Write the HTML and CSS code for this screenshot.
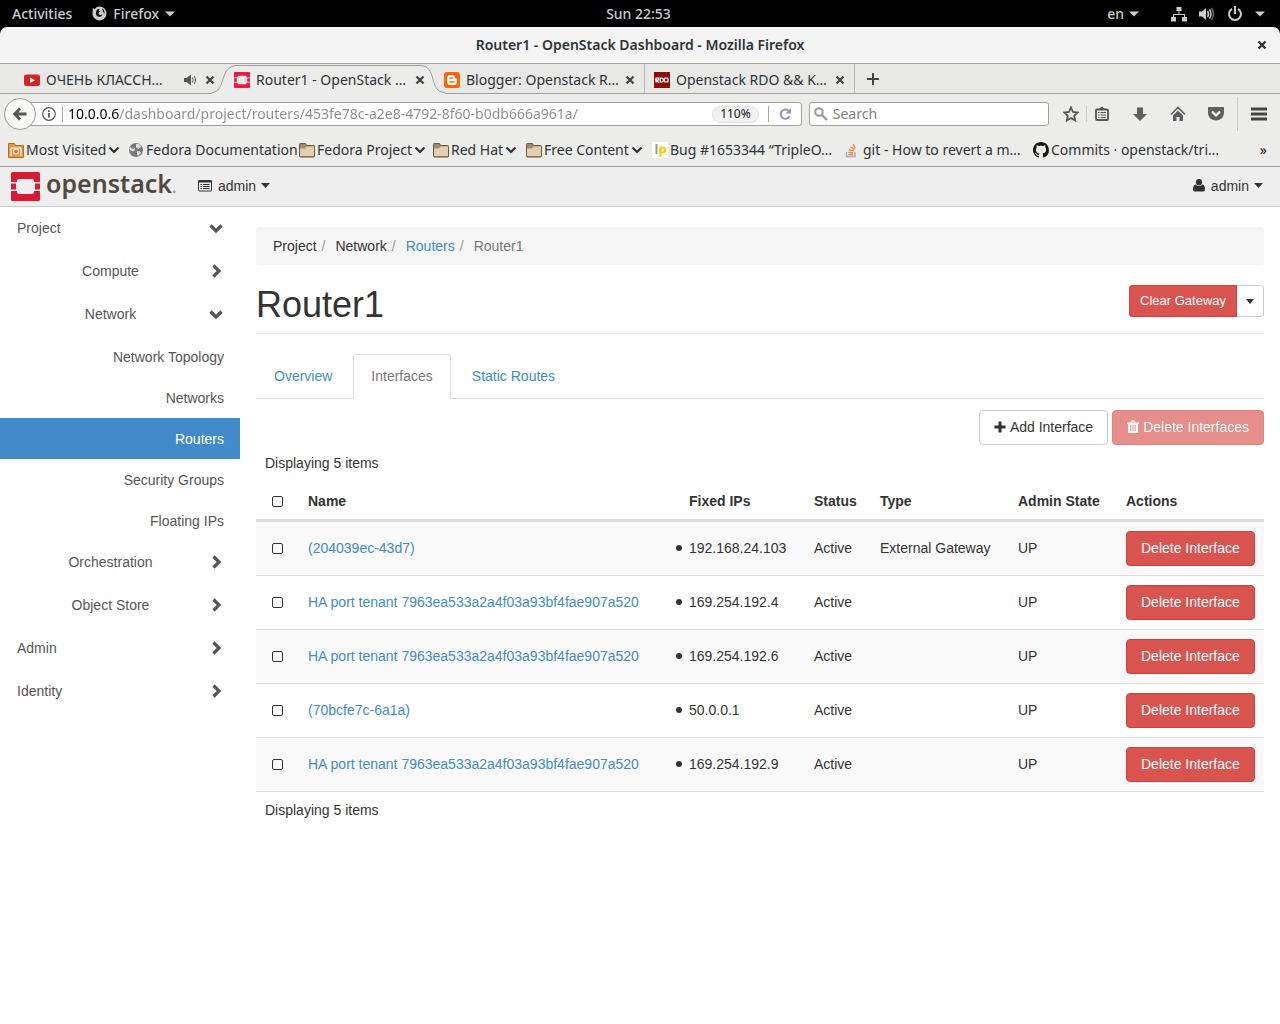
FILE: index.html
```html
<!DOCTYPE html>
<html lang="en">
<head>
<meta charset="utf-8">
<title>Router1 - OpenStack Dashboard</title>
<link rel="stylesheet" href="styles.css">
</head>
<body>
<svg class="defs" aria-hidden="true">
  <symbol id="caret" viewBox="0 0 10 6"><path d="M0 0.5h10L5 5.5z" fill="currentColor"/></symbol>
  <symbol id="close" viewBox="0 0 10 10"><path d="M1.5 1.5l7 7M8.5 1.5l-7 7" stroke="currentColor" stroke-width="2.4" fill="none"/></symbol>
  <symbol id="chev" viewBox="0 0 12 8"><path d="M1.5 1.5L6 6l4.500-4.500" stroke="currentColor" stroke-width="2.200" fill="none"/></symbol>
  <symbol id="folder" viewBox="0 0 16 16"><path d="M.5 2.500q0-1 1-1h5l1 2h7q1 0 1 1v9.500q0 1-1 1h-13q-1 0-1-1z" fill="#a08a66" stroke="#71573a"/><path d="M1 6.500h5l1.500-2H15V14H1z" fill="#e3cfb2"/></symbol>
  <symbol id="down" viewBox="0 0 14 14"><path d="M1.500 4.500L7 10l5.500-5.500" stroke="currentColor" stroke-width="3.200" fill="none"/></symbol>
  <symbol id="right" viewBox="0 0 14 14"><path d="M4.500 1.500L10 7l-5.500 5.500" stroke="currentColor" stroke-width="3.200" fill="none"/></symbol>
  <symbol id="os" viewBox="0 0 29 29"><path fill-rule="evenodd" d="M1.500 0h26Q29 0 29 1.500V10h-6V9q0-2-2-2H8Q6 7 6 9v1H0V1.500Q0 0 1.500 0zM0 11.500h5v6H0zM24 11.500h5v6h-5zM0 19h6v1q0 2 2 2h13q2 0 2-2v-1h6v8.500q0 1.500-1.500 1.500h-26Q0 29 0 27.500z" fill="currentColor"/></symbol>
</svg>

<header class="topbar">
  <div class="topbar-left">
    <span>Activities</span>
    <span class="topbar-app">
      <svg width="15" height="15" viewBox="0 0 15 15"><path d="M7.500.500a7 7 0 1 1-6.800 5.300L.8 2l2 1.200C4 1.200 5.700.5 7.500.5z" fill="#ccc"/><path d="M5 3.500q1.500-.8 2.500-.2l-.7 1.400 1.700.7-1.800 1.100Q6 8.300 7.600 9q1.600.3 2.700-1-.5 3-3.300 2.800Q4 10.500 4 7.500q0-2 1-4zM10 2.200q3 1.800 2.400 5.800L11 5.500z" fill="#111"/></svg>
      Firefox <svg width="10" height="6"><use href="#caret"/></svg>
    </span>
  </div>
  <span>Sun 22:53</span>
  <div class="topbar-right">
    <span>en <svg width="10" height="6"><use href="#caret"/></svg></span>
    <span class="topbar-status">
      <svg width="16" height="16" viewBox="0 0 16 16"><path d="M5.500 1h5v4h-5zM0 11h5v4.500H0zM11 11h5v4.500h-5zM7.500 5h1v3H14v3h-1V9H3v2H2V8h5.500z" fill="#ccc"/></svg>
      <svg width="16" height="16" viewBox="0 0 16 16"><path d="M0 5.500h3L7 2v12l-4-3.500H0z" fill="#ccc"/><path d="M8.500 5q2 3 0 6M10.500 3.500q3 4.500 0 9" stroke="#ccc" stroke-width="1.500" fill="none"/><path d="M12.500 2q4 6 0 12" stroke="#666" stroke-width="1.500" fill="none"/></svg>
      <svg width="16" height="16" viewBox="0 0 16 16"><path d="M5 2.800a6 6 0 1 0 6 0M8 0v8" stroke="#ccc" stroke-width="2" fill="none"/></svg>
      <svg width="10" height="6"><use href="#caret"/></svg>
    </span>
  </div>
</header>

<div class="frame">
<div class="titlebar">
  <span>Router1 - OpenStack Dashboard - Mozilla Firefox</span>
  <button class="window-close" aria-label="Close window"><svg width="10" height="10"><use href="#close"/></svg></button>
</div>

<div class="tabstrip">
  <div class="btab">
    <svg width="16" height="16" viewBox="0 0 16 16"><rect y="2.500" width="16" height="11.500" rx="2.500" fill="#d32323"/><path d="M6 5.500v5.500l5-2.700z" fill="#fff"/></svg>
    <span class="btab-label">ОЧЕНЬ КЛАССН…</span>
    <svg class="sound" width="14" height="12" viewBox="0 0 14 12"><path d="M0 4h2.500L7 .5v11L2.500 8H0z" fill="#555"/><path d="M8.500 3.500q1.500 2.500 0 5M10.300 2q2.800 4 0 8" stroke="#555" fill="none"/></svg>
    <button aria-label="Close tab"><svg width="10" height="10"><use href="#close"/></svg></button>
  </div>
  <div class="btab btab-active">
    <svg class="tab-shape" width="240" height="30" viewBox="0 0 240 30" aria-hidden="true"><path d="M0 28.500C14 28.500 7 1.500 25 1.500H208C226 1.500 216 28.500 233 28.500V30H0z" fill="#ececea"/><path d="M0 28.500C14 28.500 7 1.500 25 1.500H208C226 1.500 216 28.500 233 28.500" fill="none" stroke="#9b9d9e"/></svg>
    <svg class="pink" width="16" height="16" viewBox="0 0 29 29"><use href="#os"/></svg>
    <span class="btab-label">Router1 - OpenStack …</span>
    <button aria-label="Close tab"><svg width="10" height="10"><use href="#close"/></svg></button>
  </div>
  <div class="btab">
    <svg width="16" height="16" viewBox="0 0 16 16"><rect width="16" height="16" rx="3" fill="#f60"/><path d="M6.300 3h2.200q2.500 0 2.500 2.600 0 1 1 1 1 .1 1 1v2.100Q13 13 9.700 13H6.300Q3 13 3 9.700V6.300Q3 3 6.300 3z" fill="#fff"/><path d="M6 6h2.500M6 10h4" stroke="#f60" stroke-width="1.400" stroke-linecap="round"/></svg>
    <span class="btab-label">Blogger: Openstack R…</span>
    <button aria-label="Close tab"><svg width="10" height="10"><use href="#close"/></svg></button>
  </div>
  <div class="btab btab-sep">
    <svg width="16" height="16" viewBox="0 0 16 16"><path d="M0 0h16v16H0z" fill="#8a0e10"/><path d="M2 10.500V6h2.500v2H2l2.800 2.500M6.200 6h2l1 1v2.200l-1 .8h-2zM11 6h2.300l.7.700v2.600l-.7.700H11l-.5-.7V6.700z" stroke="#fff" stroke-width="1.200" fill="none"/></svg>
    <span class="btab-label">Openstack RDO &amp;&amp; K…</span>
    <button aria-label="Close tab"><svg width="10" height="10"><use href="#close"/></svg></button>
  </div>
  <button class="newtab" aria-label="New tab"><svg width="12" height="12" viewBox="0 0 12 12"><path d="M6 0v12M0 6h12" stroke="#444" stroke-width="2"/></svg></button>
</div>

<div class="navbar">
  <button class="back" aria-label="Back"><svg width="16" height="16" viewBox="0 0 16 16"><path d="M2.500 8H14.500M8 2.500L2.800 8 8 13.500" stroke="#555" stroke-width="3" fill="none"/></svg></button>
  <div class="urlbar">
    <svg width="14" height="14" viewBox="0 0 14 14"><circle cx="7" cy="7" r="6.300" fill="none" stroke="#555" stroke-width="1.200"/><path d="M7 6v4.500M7 3.200v1.800" stroke="#555" stroke-width="1.800"/></svg>
    <i class="rule"></i>
    <input class="url" type="text" aria-label="Address" value="10.0.0.6/dashboard/project/routers/453fe78c-a2e8-4792-8f60-b0db666a961a/">
    <button class="zoom">110%</button>
    <i class="rule"></i>
    <button class="reload" aria-label="Reload"><svg width="12" height="12" viewBox="0 0 12 12"><path d="M10 3.500A4.600 4.600 0 1 0 10.500 8" stroke="#8c9bab" stroke-width="2" fill="none"/><path d="M12 0v5.500H6.500z" fill="#8c9bab"/></svg></button>
  </div>
  <label class="search">
    <svg width="14" height="14" viewBox="0 0 14 14"><circle cx="5" cy="5" r="3.800" fill="none" stroke="#999" stroke-width="2"/><path d="M8 8l5 5" stroke="#999" stroke-width="2.400"/></svg>
    <input type="search" placeholder="Search" aria-label="Search">
  </label>
  <div class="tools">
    <button aria-label="Bookmark"><svg width="16" height="16" viewBox="0 0 16 16"><path d="M8 1.500l2 4.500 4.700.5-3.500 3.300 1 4.700L8 12l-4.200 2.500 1-4.700L1.300 6.500 6 6z" fill="none" stroke="#555" stroke-width="1.800"/></svg></button>
    <i class="rule rule-light"></i>
    <button aria-label="Library"><svg width="16" height="16" viewBox="0 0 16 16"><rect x="2" y="3.500" width="12" height="10.500" rx="1" fill="none" stroke="#555" stroke-width="1.800"/><path d="M5 3l3-2.500L11 3z" fill="#555"/><path d="M4 6.500h1.500M4 9h1.500M4 11.500h1.500M6.500 6.500H12M6.500 9H12M6.500 11.500H12" stroke="#555" stroke-width="1.200"/></svg></button>
    <button aria-label="Downloads"><svg width="16" height="16" viewBox="0 0 16 16"><path d="M5 1.500h6V8h4l-7 7-7-7h4z" fill="#5f5f5f"/></svg></button>
    <button aria-label="Home"><svg width="16" height="16" viewBox="0 0 16 16"><path d="M1 8.500l7-7 7 7" fill="none" stroke="#5f5f5f" stroke-width="1.600"/><path d="M3 9.500l5-5 5 5V15H9.500v-4h-3v4H3z" fill="#5f5f5f"/></svg></button>
    <button aria-label="Pocket"><svg width="16" height="16" viewBox="0 0 16 16"><path d="M1 1h14q1 0 1 1v5a8 7.500 0 0 1-16 0V2q0-1 1-1z" fill="#5f5f5f"/><path d="M4 5.500l4 4 4-4" stroke="#fff" stroke-width="2.200" fill="none"/></svg></button>
    <i class="rule rule-tall"></i>
    <button aria-label="Menu"><svg width="16" height="14" viewBox="0 0 16 14"><path d="M0 2h16M0 7h16M0 12h16" stroke="#444" stroke-width="3"/></svg></button>
  </div>
</div>

<nav class="bookmarks" aria-label="Bookmarks">
  <a href="#"><svg width="16" height="16" viewBox="0 0 16 16"><path d="M.5 1.500h6l1 2h8v12H.5z" fill="#e79a4e" stroke="#c4640f"/><path d="M3 14V6h10v8M5.500 12l5-5" stroke="#fff" fill="none"/><circle cx="8" cy="9.500" r="2.500" fill="#d97a25" stroke="#fff"/></svg><span>Most Visited</span><svg width="12" height="8"><use href="#chev"/></svg></a>
  <a href="#"><svg width="16" height="16" viewBox="0 0 16 16"><circle cx="8" cy="8" r="7" fill="#777"/><path d="M2 5q3 3 5 1 0 4-3 3-2 0-2.500-2zM8 2q4-1 5 3l-3 2-2-2zM9 9q4 0 4 2l-3 3-1-2z" fill="#ddd"/></svg><span>Fedora Documentation</span></a>
  <a href="#"><svg width="16" height="16"><use href="#folder"/></svg><span>Fedora Project</span><svg width="12" height="8"><use href="#chev"/></svg></a>
  <a href="#"><svg width="16" height="16"><use href="#folder"/></svg><span>Red Hat</span><svg width="12" height="8"><use href="#chev"/></svg></a>
  <a href="#"><svg width="16" height="16"><use href="#folder"/></svg><span>Free Content</span><svg width="12" height="8"><use href="#chev"/></svg></a>
  <a href="#"><svg width="16" height="16" viewBox="0 0 16 16"><path d="M0 0h16v16H0z" fill="#fff"/><path d="M4.500 2v10" stroke="#999" stroke-width="2"/><path d="M8.500 4.500V15" stroke="#fc0" stroke-width="2"/><circle cx="10.500" cy="8" r="2.600" fill="none" stroke="#fc0" stroke-width="2"/></svg><span>Bug #1653344 “TripleO…</span></a>
  <a href="#"><svg width="16" height="16" viewBox="0 0 16 16"><path d="M1.500 10v4.500H10V10" fill="none" stroke="#aab" stroke-width="1.400"/><path d="M3.300 12.500h5M3.400 10.200l5 .7M4 7.500l4.700 1.700M5.500 4.800l4 3M8 2.200l2.500 4.300" stroke="#f08a3c" stroke-width="1.400"/></svg><span>git - How to revert a m…</span></a>
  <a href="#"><svg width="16" height="16" viewBox="0 0 16 16"><path fill="#191717" d="M8 0C3.580 0 0 3.580 0 8c0 3.540 2.290 6.530 5.470 7.590.4.070.55-.17.55-.38 0-.19-.01-.82-.01-1.490-2.010.37-2.530-.49-2.690-.94-.09-.23-.48-.94-.82-1.130-.28-.15-.68-.52-.01-.53.63-.01 1.080.58 1.230.82.72 1.210 1.870.87 2.330.66.07-.52.28-.87.51-1.070-1.780-.2-3.640-.89-3.640-3.950 0-.87.31-1.590.82-2.150-.08-.2-.36-1.020.08-2.120 0 0 .67-.21 2.200.82.64-.18 1.320-.27 2-.27s1.360.09 2 .27c1.530-1.040 2.200-.82 2.200-.82.44 1.100.16 1.920.08 2.120.51.56.82 1.270.82 2.150 0 3.070-1.870 3.750-3.650 3.950.29.25.54.73.54 1.480 0 1.070-.01 1.930-.01 2.200 0 .21.15.46.55.38A8.010 8.010 0 0 0 16 8c0-4.420-3.580-8-8-8z"/></svg><span>Commits · openstack/tri…</span></a>
  <button class="more" aria-label="More bookmarks">»</button>
</nav>
</div>

<header class="appbar">
  <a class="brand" href="#"><svg width="29" height="29"><use href="#os"/></svg><span>openstack<small>.</small></span></a>
  <button><svg width="14" height="12" viewBox="0 0 14 12"><rect x=".5" y=".5" width="13" height="10.500" rx="1" fill="none" stroke="#333"/><path d="M0 1.500h14" stroke="#333" stroke-width="2"/><path d="M2.500 4.500H4M2.500 6.500H4M2.500 8.500H4M5 4.500h6.500M5 6.500h6.500M5 8.500h6.500" stroke="#333"/></svg>admin <svg class="tight" width="9" height="5" viewBox="0 0 9 5"><path d="M0 0h9L4.500 5z" fill="#333"/></svg></button>
  <button class="user"><svg width="12" height="13" viewBox="0 0 12 13"><circle cx="6" cy="3.200" r="3.100" fill="#333"/><path d="M2.500 5.500Q6 8.500 9.500 5.500 12 6 12 10.500q0 2-2 2H2q-2 0-2-2Q0 6 2.500 5.500z" fill="#333"/></svg>admin <svg class="tight" width="9" height="5" viewBox="0 0 9 5"><path d="M0 0h9L4.500 5z" fill="#333"/></svg></button>
</header>

<div class="layout">
<nav class="sidebar" aria-label="Dashboard">
  <a class="group" href="#">Project<svg width="14" height="14"><use href="#down"/></svg></a>
  <a class="group sub" href="#"><span>Compute</span><svg width="14" height="14"><use href="#right"/></svg></a>
  <a class="group sub" href="#"><span>Network</span><svg width="14" height="14"><use href="#down"/></svg></a>
  <a class="leaf" href="#">Network Topology</a>
  <a class="leaf" href="#">Networks</a>
  <a class="leaf current" href="#">Routers</a>
  <a class="leaf" href="#">Security Groups</a>
  <a class="leaf" href="#">Floating IPs</a>
  <a class="group sub" href="#"><span>Orchestration</span><svg width="14" height="14"><use href="#right"/></svg></a>
  <a class="group sub" href="#"><span>Object Store</span><svg width="14" height="14"><use href="#right"/></svg></a>
  <a class="group" href="#">Admin<svg width="14" height="14"><use href="#right"/></svg></a>
  <a class="group" href="#">Identity<svg width="14" height="14"><use href="#right"/></svg></a>
</nav>

<main>
  <ol class="breadcrumb">
    <li>Project</li><li>Network</li><li><a href="#">Routers</a></li><li class="here">Router1</li>
  </ol>
  <div class="page-head">
    <h1>Router1</h1>
    <div class="split"><button class="danger small">Clear Gateway</button><button class="toggle" aria-label="More actions"><svg width="8" height="5" viewBox="0 0 8 5"><path d="M0 0h8L4 5z" fill="#333"/></svg></button></div>
  </div>
  <div class="tabs">
    <a href="#">Overview</a><a class="active" href="#">Interfaces</a><a href="#">Static Routes</a>
  </div>
  <div class="actions">
    <button class="btn"><svg width="12" height="12" viewBox="0 0 12 12"><path d="M6 .5v11M.5 6h11" stroke="#333" stroke-width="3"/></svg>Add Interface</button>
    <button class="btn danger" disabled><svg width="12" height="13" viewBox="0 0 12 13"><path d="M0 2.500h3.500L4.500.500h3l1 2H12V4h-1v9H1V4H0z" fill="#fff"/><path d="M3.800 5v6M6 5v6M8.200 5v6" stroke="#d9534f"/><path d="M4.500 2h3" stroke="#d9534f"/></svg>Delete Interfaces</button>
  </div>
  <p class="count">Displaying 5 items</p>
  <table>
    <colgroup><col class="c-check"><col><col class="c-ip"><col class="c-status"><col class="c-type"><col class="c-state"><col class="c-act"></colgroup>
    <thead><tr><th><input type="checkbox" aria-label="Select all"></th><th>Name</th><th>Fixed IPs</th><th>Status</th><th>Type</th><th>Admin State</th><th>Actions</th></tr></thead>
    <tbody>
      <tr><td><input type="checkbox" aria-label="Select row 1"></td><td><a href="#">(204039ec-43d7)</a></td><td><ul><li>192.168.24.103</li></ul></td><td>Active</td><td>External Gateway</td><td>UP</td><td><button class="btn danger">Delete Interface</button></td></tr>
      <tr><td><input type="checkbox" aria-label="Select row 2"></td><td><a href="#">HA port tenant 7963ea533a2a4f03a93bf4fae907a520</a></td><td><ul><li>169.254.192.4</li></ul></td><td>Active</td><td></td><td>UP</td><td><button class="btn danger">Delete Interface</button></td></tr>
      <tr><td><input type="checkbox" aria-label="Select row 3"></td><td><a href="#">HA port tenant 7963ea533a2a4f03a93bf4fae907a520</a></td><td><ul><li>169.254.192.6</li></ul></td><td>Active</td><td></td><td>UP</td><td><button class="btn danger">Delete Interface</button></td></tr>
      <tr><td><input type="checkbox" aria-label="Select row 4"></td><td><a href="#">(70bcfe7c-6a1a)</a></td><td><ul><li>50.0.0.1</li></ul></td><td>Active</td><td></td><td>UP</td><td><button class="btn danger">Delete Interface</button></td></tr>
      <tr><td><input type="checkbox" aria-label="Select row 5"></td><td><a href="#">HA port tenant 7963ea533a2a4f03a93bf4fae907a520</a></td><td><ul><li>169.254.192.9</li></ul></td><td>Active</td><td></td><td>UP</td><td><button class="btn danger">Delete Interface</button></td></tr>
    </tbody>
  </table>
  <p class="count">Displaying 5 items</p>
</main>
</div>
</body>
</html>
```
FILE: styles.css
```css
* { box-sizing: border-box; }
body { margin: 0; background: #fff; color: #333; font: 14px/20px "Liberation Sans", Arial, sans-serif; }
a { color: #428bca; text-decoration: none; }
button { font: inherit; color: inherit; background: none; border: 0; padding: 0; margin: 0; }
svg { display: block; flex: none; }
.defs { position: absolute; width: 0; height: 0; }

/* Desktop top bar */
.topbar { display: grid; grid-template-columns: 1fr auto 1fr; align-items: center; height: 27px; padding: 0 15px 0 12px; background: #000; color: #ccc; font: 500 14px/26px "Noto Sans", sans-serif; }
.topbar-left, .topbar-right, .topbar span { display: flex; align-items: center; }
.topbar-left { gap: 20px; }
.topbar .topbar-app { gap: 6px; }
.topbar-right { justify-content: flex-end; gap: 32px; }
.topbar-right span { gap: 5px; }
.topbar .topbar-status { gap: 12px; }

/* Browser window */
.frame { background: #000; font: 14px/20px "Noto Sans", sans-serif; color: #2e3436; }
.frame button { display: flex; align-items: center; justify-content: center; }
.titlebar { display: grid; grid-template-columns: 1fr auto 1fr; align-items: center; height: 37px; background: #f4f4f4; border-bottom: 1px solid #a1a19c; border-radius: 7px 7px 0 0; font-weight: 600; }
.titlebar span { grid-column: 2; }
.titlebar .window-close { justify-self: end; margin-right: 13px; }
.tabstrip { display: flex; height: 30px; padding-left: 14px; background: #e8e8e6; border-bottom: 1px solid #a1a19c; }
.btab { position: relative; display: flex; align-items: center; width: 210px; padding: 2px 9px 0 10px; }
.btab-label { flex: 1; margin: 0 6px; white-space: nowrap; overflow: hidden; }
.btab > * { position: relative; }
.btab .sound { margin-right: 7px; }
.btab button { color: #444a4c; }
.btab .tab-shape { position: absolute; left: -12px; top: 0; }
.btab-sep { width: 211px; padding-left: 9px; border: solid #bbb; border-width: 0 1px; }
.pink { color: #ed1944; }
.newtab { width: 36px; }

.navbar { display: flex; align-items: center; height: 40px; padding: 0 13px 0 4px; background: #ececea; }
.frame .back { position: relative; width: 32px; height: 32px; border: 1px solid #9b9b98; border-radius: 50%; background: #f7f7f6; }
.urlbar, .search { display: flex; align-items: center; height: 24px; border: 1px solid #a1a19c; border-radius: 3px; background: #fff; }
.urlbar { flex: 767; margin-left: -8px; padding: 0 10px 0 13px; }
.rule { width: 1px; height: 16px; background: #aaa; margin: 0 5px 0 6px; }
.frame input { flex: 1; min-width: 0; height: 22px; padding: 0 0 2px; border: 0; outline: 0; font: inherit; background: none; }
.frame .url { color: transparent; background: linear-gradient(to right, #000 52px, #8a8a8a 52px); background-clip: text; -webkit-background-clip: text; }
.urlbar .zoom { height: 17px; padding: 0 7px; margin-right: 3px; border: 1px solid #e2e2e2; border-radius: 9px; background: #f2f2f2; font-size: 12px; color: #111; }
.reload { margin-left: 5px; }
.search { flex: 240; margin-left: 7px; padding-left: 4px; gap: 5px; }
.search input::placeholder { color: #808080; opacity: 1; }
.tools { display: flex; align-items: center; gap: 22px; margin-left: 14px; }
.tools .rule { margin: 0 -15px; }
.tools .rule-light { background: #ccc; margin: 0 -15px; }
.tools .rule-tall { height: 34px; background: #ccc; margin: 0 -9px 0 -9px; }

.bookmarks { display: grid; grid-template-columns: 120px 171px 134px 93px 126px 193px 188px 1fr auto; align-items: center; height: 33px; padding: 0 13px 0 8px; background: #ececea; border-bottom: 1px solid #a1a19c; white-space: nowrap; }
.bookmarks a { display: flex; align-items: center; gap: 2px; color: #2e3436; }
.more { color: #111; }

/* Dashboard header */
.appbar { display: flex; align-items: center; height: 40px; padding: 0 17px 0 11px; background: #eee; border-bottom: 1px solid #ccc; }
.appbar button { display: flex; align-items: center; gap: 6px; padding-bottom: 2px; }
.appbar .tight { margin-left: -1px; }
.brand { display: flex; align-items: center; gap: 6px; width: 187px; color: #da1a32; }
.brand span { color: #514942; font: 600 25px/32px "Noto Sans", sans-serif; padding-bottom: 4px; }
.brand small { font-size: 16px; color: #999; }
.appbar .user { margin-left: auto; }

/* Page */
.layout { display: grid; grid-template-columns: 240px 1fr; }
.sidebar a { display: flex; align-items: center; color: #555; }
.sidebar .group { height: 43px; justify-content: space-between; padding: 0 17px 1px; }
.sidebar .sub { padding-left: 0; }
.sub span { width: 222px; margin-right: -12px; text-align: center; }
.sidebar .leaf { height: 41px; justify-content: flex-end; padding-right: 16px; }
.sidebar .current { background: #428bca; color: #fff; }

main { padding: 20px 16px; min-width: 0; }
.breadcrumb { display: flex; list-style: none; margin: 0 0 20px; padding: 9px 17px; background: #f5f5f5; border-radius: 4px; }
.breadcrumb li + li::before { content: "/"; color: #999; padding: 0 10px 0 5px; }
.breadcrumb .here { color: #777; }
.page-head { display: flex; justify-content: space-between; align-items: flex-start; height: 49px; border-bottom: 1px solid #eee; margin-bottom: 20px; }
h1 { margin: 0; font-size: 36px; line-height: 40px; font-weight: 400; }
.split { display: flex; height: 32px; }
.danger { background: #d9534f; border: 1px solid #d43f3a; color: #fff; }
.small { padding: 0 10px; font-size: 13px; border-radius: 3px 0 0 3px; }
.toggle { width: 27px; display: flex; align-items: center; justify-content: center; border: 1px solid #ccc; border-left: 0; border-radius: 0 3px 3px 0; }
.tabs { display: flex; gap: 3px; height: 45px; border-bottom: 1px solid #ddd; }
.tabs a { height: 45px; padding: 11px 17px; border: 1px solid transparent; border-radius: 4px 4px 0 0; }
.tabs .active { color: #777; background: #fff; border-color: #ddd #ddd #fff; }
.actions { display: flex; justify-content: flex-end; gap: 4px; margin-top: 11px; }
.btn { display: flex; align-items: center; gap: 4px; height: 35px; padding: 0 14px 2px; border: 1px solid #ccc; border-radius: 4px; white-space: nowrap; }
.btn.danger { border-color: #d43f3a; }
.btn:disabled { opacity: .65; }
.count { margin: 0; padding: 8px 9px; }
table { width: 100%; table-layout: fixed; border-spacing: 0; border-bottom: 1px solid #ddd; }
th { height: 40px; padding: 2px 9px 0; text-align: left; border-bottom: 2px solid #ddd; }
td { height: 54px; padding: 0 9px 2px; border-top: 1px solid #ddd; white-space: nowrap; }
td:first-child, td:last-child { padding-bottom: 0; }
tbody tr:nth-child(odd) { background: #f9f9f9; }
.c-check { width: 43px; }
.c-ip { width: 125px; }
.c-status { width: 66px; }
.c-type { width: 138px; }
.c-state { width: 108px; }
.c-act { width: 147px; }
td ul { margin: 0 0 0 -13px; padding: 0; list-style: none; }
td li { display: flex; align-items: center; gap: 7px; }
td li::before { content: ""; width: 6px; height: 6px; border-radius: 50%; background: #333; }
table input { appearance: none; display: block; width: 11px; height: 11px; margin: 0 0 0 7px; border: 1px solid #333; border-radius: 2px; background: #fff; }
```
